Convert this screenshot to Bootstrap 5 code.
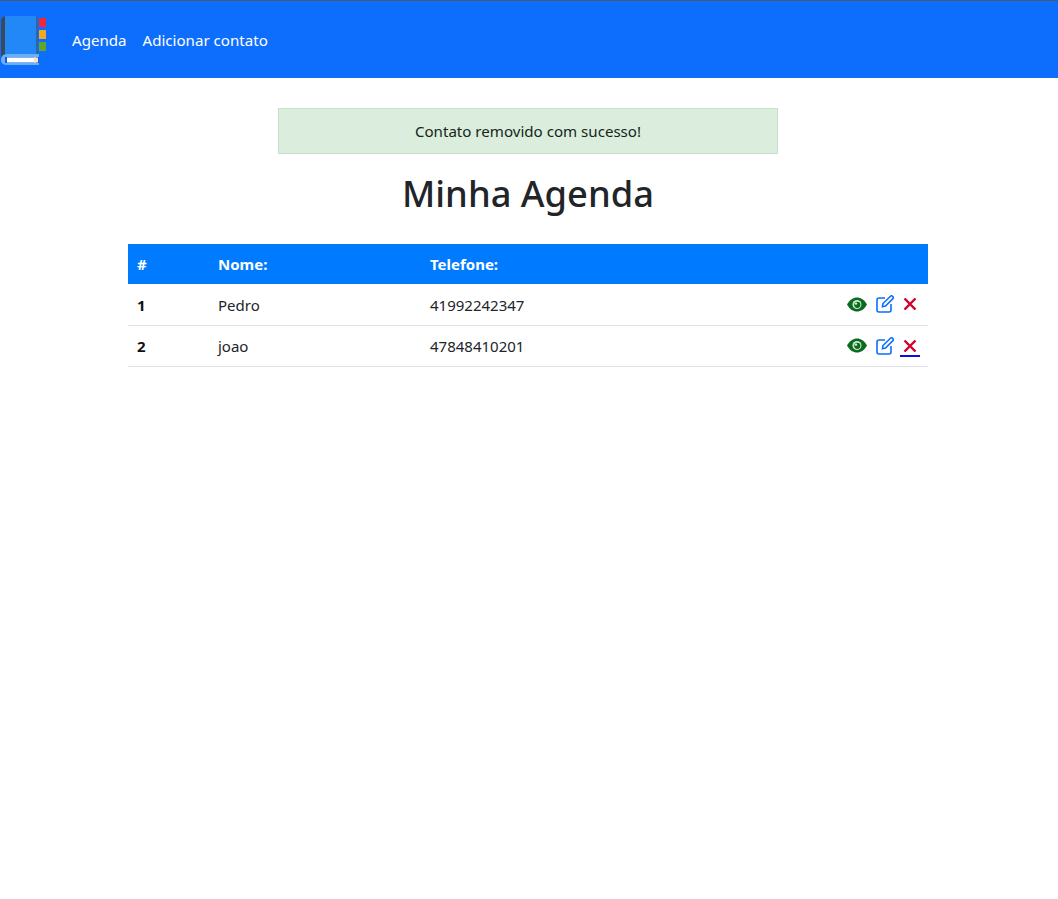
<!DOCTYPE html>
<html lang="pt">
<head>
<meta charset="utf-8">
<title>Agenda</title>
<link href="https://cdn.jsdelivr.net/npm/bootstrap@5.3.0/dist/css/bootstrap.min.css" rel="stylesheet">
<style>
body { font-family: "Noto Sans", "Open Sans", sans-serif; color: #212529; }
.top-bar { height: 78px; background: #0d6efd; border-top: 1px solid #4a5a6a; padding: 0; }
.top-bar .navbar-brand { padding: 0; margin-right: 7px; line-height: 0; }
.top-bar .nav-link { color: #fff; padding: 10px 8px 8px; font-size: 15.1px; }
.top-bar .nav-link:hover { color: #fff; }
.page-body { padding-right: 2px; }
.msg-box { width: 500px; height: 46px; margin: 30px auto 0; background: #dbeddc; border: 1px solid #c5e1ca; display: flex; align-items: center; justify-content: center; font-size: 15.1px; color: #14261a; }
.page-title { font-size: 36.3px; font-weight: 500; text-align: center; line-height: 48px; margin: 15px 0 27px; }
.agenda-wrap { width: 800px; margin: 0 auto; }
.agenda-table { font-size: 15px; margin: 0; table-layout: fixed; }
.agenda-table th, .agenda-table td { padding: 2px 8px 0 9px; vertical-align: middle; height: 41px; }
.agenda-table thead th { height: 40px; padding-top: 0; background: #007bff; color: #fff; border: 0; }
.agenda-table tbody th { color: #111; }
.agenda-table tbody tr td, .agenda-table tbody tr th { border-bottom: 1px solid #dee2e6; }
.col-num { width: 81px; }
.col-name { width: 212px; }
.acts { display: flex; justify-content: flex-end; align-items: center; margin-top: -2px; }
.acts a { display: inline-flex; margin-left: 9px; line-height: 0; }
.acts .del { padding: 0 2px 3px; margin-left: 6px; border-bottom: 2px solid transparent; margin-top: 3px; }
.acts .del.hovered { border-bottom-color: #0d0de0; }
</style>
</head>
<body>
<nav class="navbar navbar-expand top-bar">
  <a class="navbar-brand" href="#">
    <svg width="57" height="52" viewBox="0 0 57 52">
      <rect x="39" y="4" width="7" height="9" fill="#f0263c"/>
      <rect x="39" y="16" width="7" height="9" fill="#f5a81e"/>
      <rect x="39" y="28" width="7" height="9" fill="#5fa62a"/>
      <path d="M1 6 Q1 4 4 2 L36 2 L38 4 L38 40 L4 40 L1 44Z" fill="#2a66a8"/>
      <path d="M1 6 Q1 4 5 2 L5 40 L1 44Z" fill="#3c4a58"/>
      <rect x="5" y="2" width="31" height="38" fill="#2288f8"/>
      <path d="M39 40 H7 Q1 40 1 46 Q1 51 7 51 H39 V49 H7 Q5 49 5 46 Q5 43 7 43 H39Z" fill="#68b0f8"/>
      <rect x="5" y="43" width="34" height="6" fill="#0f62d8"/>
      <rect x="7" y="43.5" width="29" height="5" fill="#fff"/>
      <rect x="34" y="43.5" width="4" height="5" fill="#fbe3bf"/>
    </svg>
  </a>
  <ul class="navbar-nav">
    <li class="nav-item"><a class="nav-link" href="#">Agenda</a></li>
    <li class="nav-item"><a class="nav-link" href="#">Adicionar contato</a></li>
  </ul>
</nav>
<main class="page-body">
  <div class="msg-box" role="alert">Contato removido com sucesso!</div>
  <h1 class="page-title">Minha Agenda</h1>
  <div class="agenda-wrap">
    <table class="table agenda-table">
      <thead>
        <tr><th class="col-num">#</th><th class="col-name">Nome:</th><th>Telefone:</th><th></th></tr>
      </thead>
      <tbody>
        <tr><th>1</th><td>Pedro</td><td>41992242347</td>
          <td><div class="acts">
            <a href="#"><svg width="20" height="15" viewBox="0 0 20 15"><path d="M0 7.500C3 2.500 6 .5 10 .5S17 2.500 20 7.500C17 12.500 14 14.500 10 14.500S3 12.500 0 7.500Z" fill="#0b6b1e"/><circle cx="10" cy="7.500" r="4.500" fill="#cfe5d3"/><circle cx="10.300" cy="7.800" r="3.100" fill="#0b6b1e"/><circle cx="9" cy="6.600" r="1.200" fill="#dff0e2"/></svg></a>
            <a href="#"><svg width="18" height="18" viewBox="0 0 18 18" fill="none" stroke="#0d6efd" stroke-width="1.6"><path d="M9 3H3a2 2 0 0 0-2 2v10a2 2 0 0 0 2 2h10a2 2 0 0 0 2-2V9"/><path d="M7 8.500 14.500 1.200a1.400 1.400 0 0 1 2 0l.4.4a1.400 1.400 0 0 1 0 2L9.500 11 6.500 11.700Z"/></svg></a>
            <a class="del" href="#"><svg width="16" height="14" viewBox="0 0 16 14"><path d="M2.500 2.500 13.500 13.500M13.500 2.500 2.500 13.500" stroke="#d1002f" stroke-width="2.400"/></svg></a>
          </div></td></tr>
        <tr><th>2</th><td>joao</td><td>47848410201</td>
          <td><div class="acts">
            <a href="#"><svg width="20" height="15" viewBox="0 0 20 15"><path d="M0 7.500C3 2.500 6 .5 10 .5S17 2.500 20 7.500C17 12.500 14 14.500 10 14.500S3 12.500 0 7.500Z" fill="#0b6b1e"/><circle cx="10" cy="7.500" r="4.500" fill="#cfe5d3"/><circle cx="10.300" cy="7.800" r="3.100" fill="#0b6b1e"/><circle cx="9" cy="6.600" r="1.200" fill="#dff0e2"/></svg></a>
            <a href="#"><svg width="18" height="18" viewBox="0 0 18 18" fill="none" stroke="#0d6efd" stroke-width="1.6"><path d="M9 3H3a2 2 0 0 0-2 2v10a2 2 0 0 0 2 2h10a2 2 0 0 0 2-2V9"/><path d="M7 8.500 14.500 1.200a1.400 1.400 0 0 1 2 0l.4.4a1.400 1.400 0 0 1 0 2L9.500 11 6.500 11.700Z"/></svg></a>
            <a class="del hovered" href="#"><svg width="16" height="14" viewBox="0 0 16 14"><path d="M2.500 2.500 13.500 13.500M13.500 2.500 2.500 13.500" stroke="#d1002f" stroke-width="2.400"/></svg></a>
          </div></td></tr>
      </tbody>
    </table>
  </div>
</main>
<script src="https://cdn.jsdelivr.net/npm/bootstrap@5.3.0/dist/js/bootstrap.bundle.min.js"></script>
</body>
</html>
